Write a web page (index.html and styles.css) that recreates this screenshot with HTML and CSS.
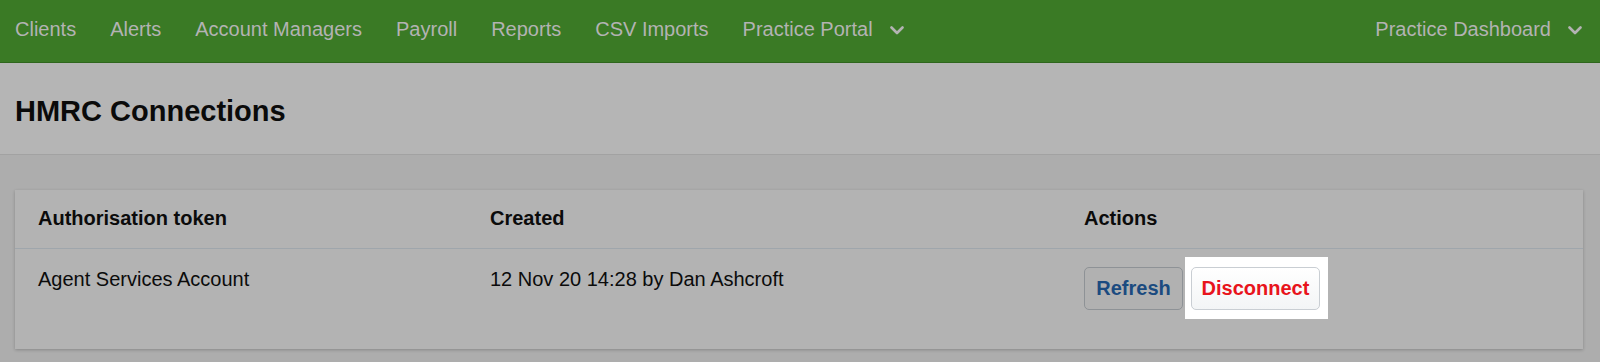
FILE: index.html
```html
<!DOCTYPE html>
<html lang="en">
<head>
<meta charset="utf-8">
<title>HMRC Connections</title>
<link rel="stylesheet" href="styles.css">
</head>
<body>
<nav class="topnav">
  <ul class="nav-left">
    <li>Clients</li>
    <li>Alerts</li>
    <li>Account Managers</li>
    <li>Payroll</li>
    <li>Reports</li>
    <li>CSV Imports</li>
    <li class="dropdown">Practice Portal
      <svg class="chev" width="14" height="9" viewBox="0 0 14 9"><polyline points="1.5,1.5 7,7 12.5,1.5" fill="none" stroke="currentColor" stroke-width="2.6" stroke-linecap="round" stroke-linejoin="round"/></svg>
    </li>
  </ul>
  <div class="nav-right dropdown">Practice Dashboard
    <svg class="chev" width="14" height="9" viewBox="0 0 14 9"><polyline points="1.5,1.5 7,7 12.5,1.5" fill="none" stroke="currentColor" stroke-width="2.6" stroke-linecap="round" stroke-linejoin="round"/></svg>
  </div>
</nav>
<header class="page-header">
  <h1>HMRC Connections</h1>
</header>
<main class="content">
  <section class="card">
    <div class="row head">
      <div class="cell">Authorisation token</div>
      <div class="cell">Created</div>
      <div class="cell">Actions</div>
    </div>
    <div class="row body">
      <div class="cell">Agent Services Account</div>
      <div class="cell">12 Nov 20 14:28 by Dan Ashcroft</div>
      <div class="cell actions">
        <button class="btn btn-refresh">Refresh</button>
        <span class="highlight"><button class="btn btn-disconnect">Disconnect</button></span>
      </div>
    </div>
  </section>
</main>
</body>
</html>
```

FILE: styles.css
```css
* { box-sizing: border-box; }
html, body { margin: 0; padding: 0; }
body {
  font-family: "Liberation Sans", Arial, Helvetica, sans-serif;
  background: #adadad;
  color: #0b0b0b;
  width: 1600px;
  height: 362px;
  overflow: hidden;
}
.topnav {
  height: 63px;
  background: #3a7a25;
  border-bottom: 1px solid #2f661d;
  display: flex;
  align-items: center;
  justify-content: space-between;
  padding: 0 18px 3px 15px;
  color: #b3b3b3;
  font-size: 20px;
}
.nav-left {
  list-style: none;
  margin: 0;
  padding: 0;
  display: flex;
  gap: 34px;
}
.nav-left li { white-space: nowrap; display: flex; align-items: center; }
.dropdown { display: flex; align-items: center; }
.chev { margin-left: 17px; margin-top: 2px; }
.page-header {
  height: 92px;
  background: #b5b5b5;
  border-bottom: 1px solid #a2a2a2;
  display: flex;
  align-items: center;
  padding: 5px 15px 0 15px;
}
.page-header h1 {
  margin: 0;
  font-size: 29px;
  font-weight: bold;
  color: #0a0a0a;
}
.content {
  padding: 35px 17px 0 15px;
}
.card {
  background: #b3b3b3;
  box-shadow: 0 1px 3px rgba(0,0,0,0.22);
  height: 159px;
}
.row {
  display: grid;
  grid-template-columns: 452px 594px 1fr;
  font-size: 20px;
  line-height: 22px;
}
.row .cell { padding-left: 23px; }
.row.head {
  font-weight: bold;
  padding: 17px 0 19px;
  border-bottom: 1px solid #9fa6ac;
}
.row.body { padding: 18px 0 0; }
.row.body .cell:not(.actions) { padding-top: 1px; }
.actions { display: flex; align-items: flex-start; }
.btn {
  font-family: "Liberation Sans", Arial, Helvetica, sans-serif;
  font-size: 20px;
  font-weight: bold;
  height: 43px;
  border-radius: 5px;
  cursor: pointer;
}
.btn-refresh {
  background: #b1b1b1;
  border: 1px solid #8e9296;
  color: #1b4b80;
  width: 99px;
  padding: 0;
}
.highlight {
  display: inline-block;
  background: #ffffff;
  margin-left: 2px;
  margin-top: -10px;
  padding: 10px 8px 9px 6px;
}
.btn-disconnect {
  display: block;
  background: linear-gradient(#ffffff, #f3f5f6);
  border: 1px solid #c9ced3;
  color: #e8141c;
  width: 129px;
  padding: 0;
}
```
